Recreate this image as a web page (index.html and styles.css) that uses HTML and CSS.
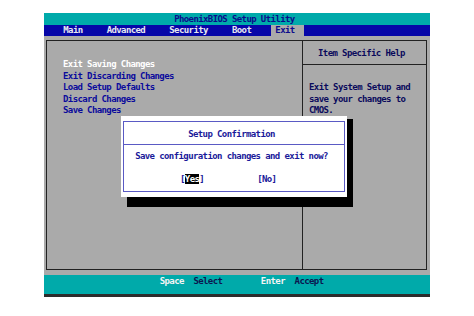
FILE: index.html
```html
<!DOCTYPE html>
<html lang="en">
<head>
  <meta charset="UTF-8">
  <title>PhoenixBIOS Setup Utility</title>
  <link rel="stylesheet" href="styles.css">
</head>
<body>

<div class="screen">
  <div class="title">PhoenixBIOS Setup Utility</div>

  <nav class="menu">
    <span class="tab first">Main</span>
    <span class="tab">Advanced</span>
    <span class="tab">Security</span>
    <span class="tab">Boot</span>
    <span class="tab active">Exit</span>
  </nav>

  <div class="body">
    <div class="panel">
      <ul class="items">
        <li class="selected">Exit Saving Changes</li>
        <li>Exit Discarding Changes</li>
        <li>Load Setup Defaults</li>
        <li>Discard Changes</li>
        <li>Save Changes</li>
      </ul>
      <div class="help">
        <div class="help-head">Item Specific Help</div>
        <p class="help-text">Exit System Setup and<br>save your changes to<br>CMOS.</p>
      </div>
    </div>
  </div>

  <div class="footer">
    <span class="key">Space</span>
    <span class="act">Select</span>
    <span class="key far">Enter</span>
    <span class="act">Accept</span>
  </div>

  <!-- popup over the panel -->
  <div class="dialog">
    <div class="dialog-inner">
      <div class="dialog-title">Setup Confirmation</div>
      <div class="dialog-text">Save configuration changes and exit now?</div>
      <div class="dialog-buttons">
        <span>[<b class="hl">Yes</b>]</span>
        <span class="no">[No]</span>
      </div>
    </div>
  </div>
</div>

</body>
</html>
```

FILE: styles.css
```css
/* ----- text mode screen ----- */
:root {
  --c: 4.82px;      /* one character cell */
  --row: 11.5px;    /* one text row */
}

body {
  margin: 0;
  background: #fff;
}

.screen {
  position: relative;
  width: 386px;
  margin: 13px 0 0 44px;
  font-family: "DejaVu Sans Mono", "Liberation Mono", monospace;
  font-weight: bold;
  font-size: 9px;
  letter-spacing: -0.6px;
  line-height: var(--row);
  white-space: nowrap;
}

/* ----- top bars ----- */
.title {
  height: 12px;
  line-height: 12px;
  background: #00aaaa;
  color: #0a0a8c;
  padding-left: calc(var(--c) * 27);
}

.menu {
  display: flex;
  height: 11px;
  line-height: 11px;
  background: #0606a8;
  color: #e8e8f0;
}
.tab {
  margin-left: calc(var(--c) * 5);
}
.tab.first {
  margin-left: calc(var(--c) * 4);
}
.tab.active {
  margin-left: calc(var(--c) * 4);
  padding: 0 calc(var(--c) * 2) 0 var(--c);
  background: #aaaaaa;
  color: #0a0a8c;
}

/* ----- main area ----- */
.body {
  background: #aaaaaa;
  height: 239px;
  padding: 4px 3px 5px 2px;
  box-sizing: border-box;
}

.panel {
  height: 100%;
  box-sizing: border-box;
  border: 1px solid #222;
  display: grid;
  grid-template-columns: 255px 1fr;
}

.items {
  list-style: none;
  margin: 0;
  padding: 18px 0 0 16px;
  color: #0a0a9c;
}
.items .selected {
  color: #fff;
}

.help {
  border-left: 1px solid #222;
}
.help-head {
  height: 23px;
  line-height: 24px;
  padding-left: 15px;
  border-bottom: 1px solid #222;
  color: #0a0a5c;
}
.help-text {
  margin: 0;
  padding: 17px 0 0 6px;
  color: #0a0a5c;
}

/* ----- key legend ----- */
.footer {
  display: flex;
  height: 22px;
  padding: 1px 0 0 calc(var(--c) * 24);
  box-sizing: border-box;
  background: #00aaaa;
  border-bottom: 3px solid #2c2c2c;
}
.footer .key {
  color: #f4f4f4;
}
.footer .act {
  color: #0c1650;
  margin-left: calc(var(--c) * 2);
}
.footer .far {
  margin-left: calc(var(--c) * 8);
}

/* ----- confirmation popup ----- */
.dialog {
  position: absolute;
  left: 77px;
  top: 103px;
  width: 226px;
  height: 81px;
  box-sizing: border-box;
  padding: 5px 2px;
  background: #fff;
  box-shadow: 6px 10px 0 #000, 6px 3px 0 #000;
  color: #1a1a9a;
}
.dialog-inner {
  height: 100%;
  box-sizing: border-box;
  border: 1px solid #5a5ac4;
  padding-right: 5px;
}
.dialog-title {
  height: 22px;
  line-height: 24px;
  text-align: center;
  border-bottom: 1px solid #5a5ac4;
  margin-right: -5px;
  padding-right: 5px;
}
.dialog-text {
  margin-top: 6px;
  text-align: center;
}
.dialog-buttons {
  display: flex;
  margin-top: 11px;
  padding-left: 56px;
}
.dialog-buttons .no {
  margin-left: calc(var(--c) * 11);
}
.hl {
  background: #000;
  color: #fff;
  font-weight: bold;
}
```
